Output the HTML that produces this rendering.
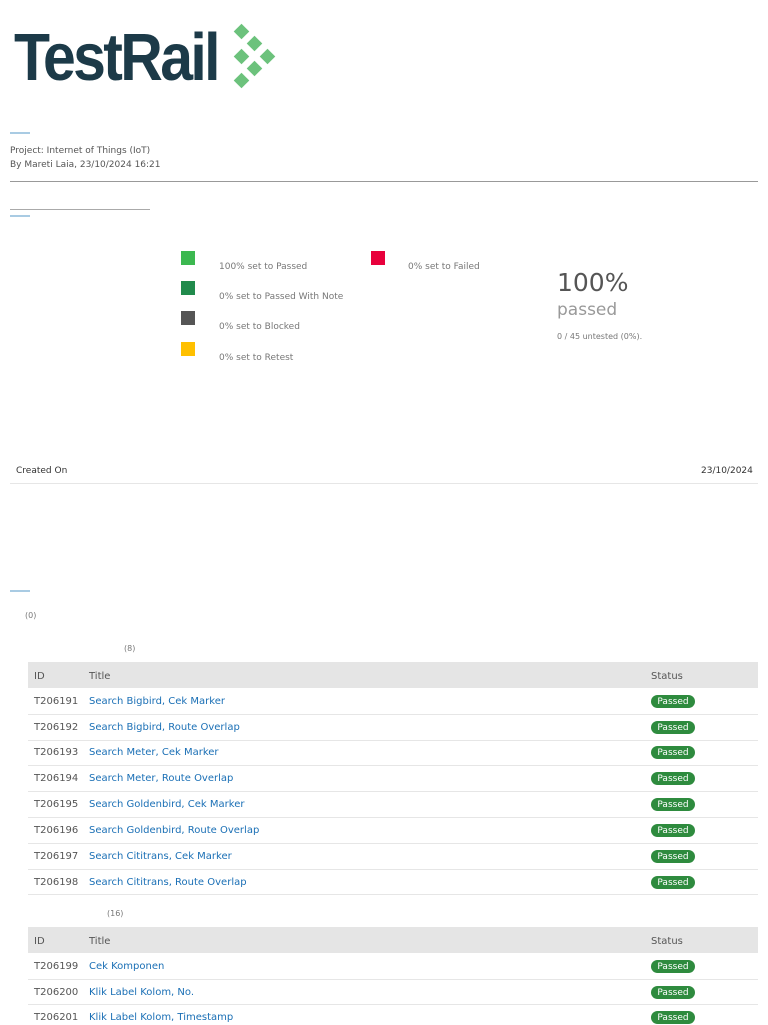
<!DOCTYPE html>
<html><head><meta charset="utf-8"><style>
body{margin:0;width:768px;height:1024px;overflow:hidden;background:#fff;font-family:"DejaVu Sans","Liberation Sans",sans-serif;position:relative}
.a{position:absolute;white-space:nowrap}
.logo{left:14px;top:20px;font-family:"Liberation Sans",sans-serif;font-weight:bold;font-size:67px;color:#1c3a48;transform:scaleX(0.88);transform-origin:left top;letter-spacing:-3px;line-height:76px}
.d{position:absolute;width:11px;height:11px;background:#6cc27c;transform:rotate(45deg)}
.bl{position:absolute;height:2px;background:#a9cbe3}
.s{font-size:9px;color:#555}
.sq{position:absolute;width:14px;height:14px}
.lg{font-size:9px;color:#777}
.th{position:absolute;left:28px;width:730px;height:26px;background:#e5e5e5}
.t{font-size:10px;color:#555}
.l{font-size:10px;color:#1a6fb5}
.b{position:absolute;left:651px;width:44px;height:13px;border-radius:7px;background:#2e8b3e;color:#fff;font-size:9px;text-align:center;line-height:14px}
.hr{position:absolute;left:28px;width:730px;height:1px;background:#e6e6e6}
</style></head><body>
<div class="a logo">TestRail</div>
<div class="d" style="left:236px;top:26px"></div>
<div class="d" style="left:249px;top:38px"></div>
<div class="d" style="left:236px;top:51px"></div>
<div class="d" style="left:262px;top:51px"></div>
<div class="d" style="left:249px;top:63px"></div>
<div class="d" style="left:236px;top:75px"></div>

<div class="bl" style="left:10px;top:132px;width:20px"></div>
<div class="a s" style="left:10px;top:146px">Project: Internet of Things (IoT)</div>
<div class="a s" style="left:10px;top:160px">By Mareti Laia, 23/10/2024 16:21</div>
<div class="a" style="left:10px;top:181px;width:748px;height:1px;background:#999"></div>
<div class="a" style="left:10px;top:209px;width:140px;height:1px;background:#aaa"></div>
<div class="bl" style="left:10px;top:215px;width:20px"></div>

<div class="sq" style="left:181px;top:251px;background:#3cb850"></div>
<div class="sq" style="left:181px;top:281px;background:#218b4c"></div>
<div class="sq" style="left:181px;top:311px;background:#555"></div>
<div class="sq" style="left:181px;top:342px;background:#ffc000"></div>
<div class="sq" style="left:371px;top:251px;background:#e8003c"></div>
<div class="a lg" style="left:219px;top:262px">100% set to Passed</div>
<div class="a lg" style="left:219px;top:292px">0% set to Passed With Note</div>
<div class="a lg" style="left:219px;top:322px">0% set to Blocked</div>
<div class="a lg" style="left:219px;top:353px">0% set to Retest</div>
<div class="a lg" style="left:408px;top:262px">0% set to Failed</div>
<div class="a" style="left:557px;top:268px;font-size:25px;color:#555">100%</div>
<div class="a" style="left:557px;top:300px;font-size:17px;color:#999">passed</div>
<div class="a" style="left:557px;top:332px;font-size:8px;color:#777">0 / 45 untested (0%).</div>

<div class="a" style="left:16px;top:466px;font-size:9px;color:#333">Created On</div>
<div class="a" style="left:701px;top:466px;font-size:9px;color:#333">23/10/2024</div>
<div class="a" style="left:10px;top:483px;width:748px;height:1px;background:#e6e6e6"></div>

<div class="bl" style="left:10px;top:590px;width:20px"></div>
<div class="a" style="left:25px;top:611px;font-size:8px;color:#777">(0)</div>
<div class="a" style="left:124px;top:644px;font-size:8px;color:#777">(8)</div>

<div class="th" style="top:662px"></div>
<div class="a t" style="left:34px;top:671px">ID</div>
<div class="a t" style="left:89px;top:671px">Title</div>
<div class="a t" style="left:651px;top:671px">Status</div>

<div class="a t" style="left:34px;top:696px">T206191</div><div class="a l" style="left:89px;top:696px">Search Bigbird, Cek Marker</div><div class="b" style="top:695px">Passed</div><div class="hr" style="top:714px"></div>
<div class="a t" style="left:34px;top:722px">T206192</div><div class="a l" style="left:89px;top:722px">Search Bigbird, Route Overlap</div><div class="b" style="top:721px">Passed</div><div class="hr" style="top:740px"></div>
<div class="a t" style="left:34px;top:747px">T206193</div><div class="a l" style="left:89px;top:747px">Search Meter, Cek Marker</div><div class="b" style="top:746px">Passed</div><div class="hr" style="top:765px"></div>
<div class="a t" style="left:34px;top:773px">T206194</div><div class="a l" style="left:89px;top:773px">Search Meter, Route Overlap</div><div class="b" style="top:772px">Passed</div><div class="hr" style="top:791px"></div>
<div class="a t" style="left:34px;top:799px">T206195</div><div class="a l" style="left:89px;top:799px">Search Goldenbird, Cek Marker</div><div class="b" style="top:798px">Passed</div><div class="hr" style="top:817px"></div>
<div class="a t" style="left:34px;top:825px">T206196</div><div class="a l" style="left:89px;top:825px">Search Goldenbird, Route Overlap</div><div class="b" style="top:824px">Passed</div><div class="hr" style="top:843px"></div>
<div class="a t" style="left:34px;top:851px">T206197</div><div class="a l" style="left:89px;top:851px">Search Cititrans, Cek Marker</div><div class="b" style="top:850px">Passed</div><div class="hr" style="top:869px"></div>
<div class="a t" style="left:34px;top:877px">T206198</div><div class="a l" style="left:89px;top:877px">Search Cititrans, Route Overlap</div><div class="b" style="top:876px">Passed</div><div class="hr" style="top:894px"></div>

<div class="a" style="left:107px;top:909px;font-size:8px;color:#777">(16)</div>
<div class="th" style="top:927px"></div>
<div class="a t" style="left:34px;top:936px">ID</div>
<div class="a t" style="left:89px;top:936px">Title</div>
<div class="a t" style="left:651px;top:936px">Status</div>
<div class="a t" style="left:34px;top:961px">T206199</div><div class="a l" style="left:89px;top:961px">Cek Komponen</div><div class="b" style="top:960px">Passed</div><div class="hr" style="top:979px"></div>
<div class="a t" style="left:34px;top:987px">T206200</div><div class="a l" style="left:89px;top:987px">Klik Label Kolom, No.</div><div class="b" style="top:986px">Passed</div><div class="hr" style="top:1004px"></div>
<div class="a t" style="left:34px;top:1012px">T206201</div><div class="a l" style="left:89px;top:1012px">Klik Label Kolom, Timestamp</div><div class="b" style="top:1011px">Passed</div>
</body></html>
